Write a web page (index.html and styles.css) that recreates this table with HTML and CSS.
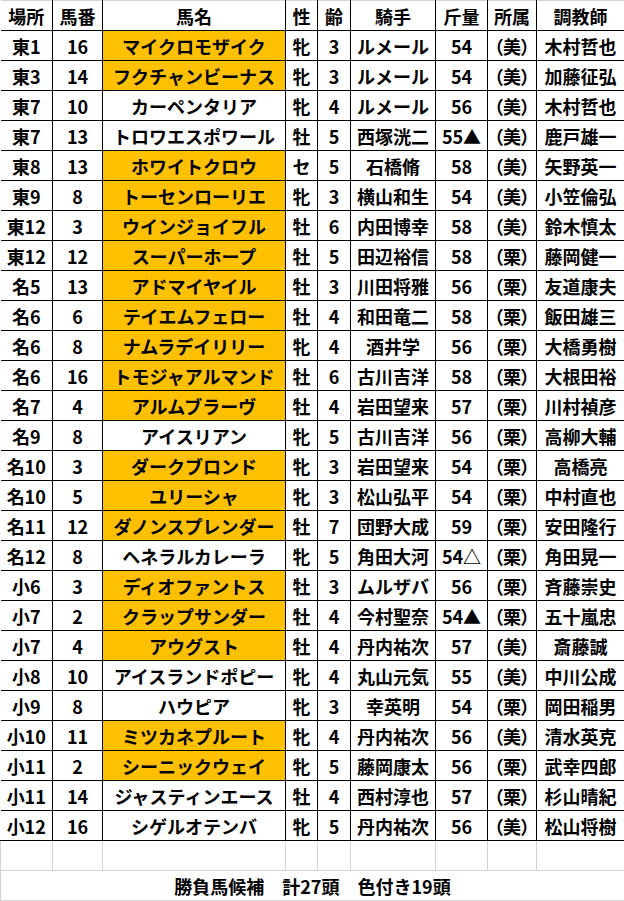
FILE: index.html
```html
<!DOCTYPE html>
<html lang="ja">
<head>
<meta charset="utf-8">
<title>勝負馬候補</title>
<link rel="stylesheet" href="styles.css">
</head>
<body>
<table class="sheet">
  <colgroup>
    <col class="c-place"><col class="c-num"><col class="c-name"><col class="c-sex"><col class="c-age"><col class="c-jockey"><col class="c-weight"><col class="c-stable"><col class="c-trainer">
  </colgroup>
  <thead>
    <tr class="head"><th>場所</th><th>馬番</th><th>馬名</th><th>性</th><th>齢</th><th>騎手</th><th>斤量</th><th>所属</th><th>調教師</th></tr>
  </thead>
  <tbody>
    <tr><td>東1</td><td>16</td><td class="name hl">マイクロモザイク</td><td>牝</td><td>3</td><td>ルメール</td><td>54</td><td class="st">（美）</td><td>木村哲也</td></tr>
    <tr><td>東3</td><td>14</td><td class="name hl">フクチャンビーナス</td><td>牝</td><td>3</td><td>ルメール</td><td>54</td><td class="st">（美）</td><td>加藤征弘</td></tr>
    <tr><td>東7</td><td>10</td><td class="name">カーペンタリア</td><td>牝</td><td>4</td><td>ルメール</td><td>56</td><td class="st">（美）</td><td>木村哲也</td></tr>
    <tr><td>東7</td><td>13</td><td class="name">トロワエスポワール</td><td>牡</td><td>5</td><td>西塚洸二</td><td>55▲</td><td class="st">（美）</td><td>鹿戸雄一</td></tr>
    <tr><td>東8</td><td>13</td><td class="name hl">ホワイトクロウ</td><td>セ</td><td>5</td><td>石橋脩</td><td>58</td><td class="st">（美）</td><td>矢野英一</td></tr>
    <tr><td>東9</td><td>8</td><td class="name hl">トーセンローリエ</td><td>牝</td><td>3</td><td>横山和生</td><td>54</td><td class="st">（美）</td><td>小笠倫弘</td></tr>
    <tr><td>東12</td><td>3</td><td class="name hl">ウインジョイフル</td><td>牡</td><td>6</td><td>内田博幸</td><td>58</td><td class="st">（美）</td><td>鈴木慎太</td></tr>
    <tr><td>東12</td><td>12</td><td class="name hl">スーパーホープ</td><td>牡</td><td>5</td><td>田辺裕信</td><td>58</td><td class="st">（栗）</td><td>藤岡健一</td></tr>
    <tr><td>名5</td><td>13</td><td class="name hl">アドマイヤイル</td><td>牡</td><td>3</td><td>川田将雅</td><td>56</td><td class="st">（栗）</td><td>友道康夫</td></tr>
    <tr><td>名6</td><td>6</td><td class="name hl">テイエムフェロー</td><td>牡</td><td>4</td><td>和田竜二</td><td>58</td><td class="st">（栗）</td><td>飯田雄三</td></tr>
    <tr><td>名6</td><td>8</td><td class="name hl">ナムラデイリリー</td><td>牝</td><td>4</td><td>酒井学</td><td>56</td><td class="st">（栗）</td><td>大橋勇樹</td></tr>
    <tr><td>名6</td><td>16</td><td class="name hl">トモジャアルマンド</td><td>牡</td><td>6</td><td>古川吉洋</td><td>58</td><td class="st">（栗）</td><td>大根田裕</td></tr>
    <tr><td>名7</td><td>4</td><td class="name hl">アルムブラーヴ</td><td>牡</td><td>4</td><td>岩田望来</td><td>57</td><td class="st">（栗）</td><td>川村禎彦</td></tr>
    <tr><td>名9</td><td>8</td><td class="name">アイスリアン</td><td>牝</td><td>5</td><td>古川吉洋</td><td>56</td><td class="st">（栗）</td><td>高柳大輔</td></tr>
    <tr><td>名10</td><td>3</td><td class="name hl">ダークブロンド</td><td>牝</td><td>3</td><td>岩田望来</td><td>54</td><td class="st">（栗）</td><td>高橋亮</td></tr>
    <tr><td>名10</td><td>5</td><td class="name hl">ユリーシャ</td><td>牝</td><td>3</td><td>松山弘平</td><td>54</td><td class="st">（栗）</td><td>中村直也</td></tr>
    <tr><td>名11</td><td>12</td><td class="name hl">ダノンスプレンダー</td><td>牡</td><td>7</td><td>団野大成</td><td>59</td><td class="st">（栗）</td><td>安田隆行</td></tr>
    <tr><td>名12</td><td>8</td><td class="name">ヘネラルカレーラ</td><td>牝</td><td>5</td><td>角田大河</td><td>54△</td><td class="st">（栗）</td><td>角田晃一</td></tr>
    <tr><td>小6</td><td>3</td><td class="name hl">ディオファントス</td><td>牡</td><td>3</td><td>ムルザバ</td><td>56</td><td class="st">（栗）</td><td>斉藤崇史</td></tr>
    <tr><td>小7</td><td>2</td><td class="name hl">クラップサンダー</td><td>牡</td><td>4</td><td>今村聖奈</td><td>54▲</td><td class="st">（栗）</td><td>五十嵐忠</td></tr>
    <tr><td>小7</td><td>4</td><td class="name hl">アウグスト</td><td>牡</td><td>4</td><td>丹内祐次</td><td>57</td><td class="st">（美）</td><td>斎藤誠</td></tr>
    <tr><td>小8</td><td>10</td><td class="name">アイスランドポピー</td><td>牝</td><td>4</td><td>丸山元気</td><td>55</td><td class="st">（美）</td><td>中川公成</td></tr>
    <tr><td>小9</td><td>8</td><td class="name">ハウピア</td><td>牝</td><td>3</td><td>幸英明</td><td>54</td><td class="st">（栗）</td><td>岡田稲男</td></tr>
    <tr><td>小10</td><td>11</td><td class="name hl">ミツカネプルート</td><td>牝</td><td>4</td><td>丹内祐次</td><td>56</td><td class="st">（美）</td><td>清水英克</td></tr>
    <tr><td>小11</td><td>2</td><td class="name hl">シーニックウェイ</td><td>牝</td><td>5</td><td>藤岡康太</td><td>56</td><td class="st">（栗）</td><td>武幸四郎</td></tr>
    <tr><td>小11</td><td>14</td><td class="name">ジャスティンエース</td><td>牡</td><td>4</td><td>西村淳也</td><td>57</td><td class="st">（栗）</td><td>杉山晴紀</td></tr>
    <tr><td>小12</td><td>16</td><td class="name">シゲルオテンバ</td><td>牝</td><td>5</td><td>丹内祐次</td><td>56</td><td class="st">（美）</td><td>松山将樹</td></tr>
    <tr class="blank"><td></td><td></td><td></td><td></td><td></td><td></td><td></td><td></td><td></td></tr>
  </tbody>
  <tfoot>
    <tr class="foot"><td colspan="9">勝負馬候補　計27頭　色付き19頭</td></tr>
  </tfoot>
</table>
</body>
</html>
```

FILE: styles.css
```css
html, body {
  margin: 0;
  padding: 0;
  background: #ffffff;
}

.sheet {
  border-collapse: collapse;
  table-layout: fixed;
  width: 624px;
  font-family: "Noto Sans CJK JP", "Noto Sans", sans-serif;
  font-weight: bold;
  font-size: 18px;
  color: #000000;
}

.c-place { width: 52px; }
.c-num { width: 50px; }
.c-name { width: 183px; }
.c-sex { width: 32px; }
.c-age { width: 33px; }
.c-jockey { width: 85px; }
.c-weight { width: 52px; }
.c-stable { width: 49px; }
.c-trainer { width: 88px; }

.sheet th,
.sheet td {
  height: 29px;
  padding: 0;
  border: 1px solid #000000;
  text-align: center;
  vertical-align: middle;
  white-space: nowrap;
  overflow: hidden;
  line-height: 1;
  font-weight: bold;
}

.sheet tr > :first-child {
  border-left: none;
}

.head th {
  border-top: 1px solid #d4d4d4;
}

.hl {
  background: #ffc000;
}

.st {
  font-feature-settings: "palt";
}

.blank td {
  border: 1px solid #d4d4d4;
  border-top: 1px solid #000000;
}

.blank td:first-child {
  border-left: 1px solid #d4d4d4;
}

.foot td {
  border: 1px solid #d4d4d4;
  border-top: 1px solid #d4d4d4;
}

.foot td:first-child {
  border-left: 1px solid #d4d4d4;
}
```
